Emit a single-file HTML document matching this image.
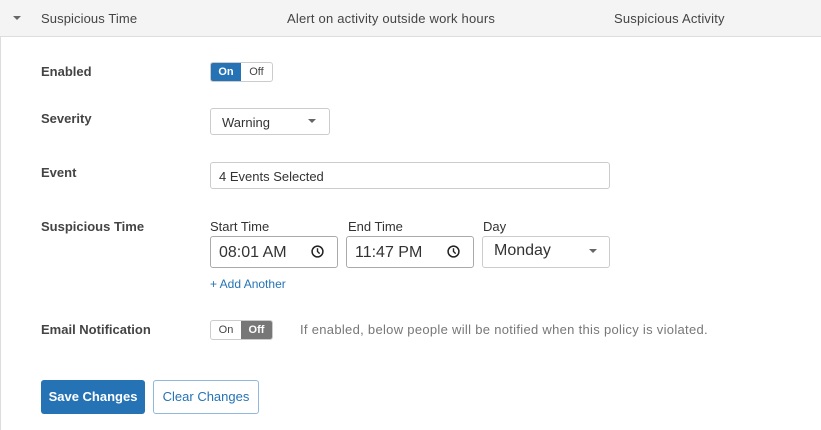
<!DOCTYPE html>
<html><head><style>
*{box-sizing:border-box;margin:0;padding:0}
body{width:821px;height:430px;background:#fff;font-family:"Liberation Sans",sans-serif;font-size:13px;color:#333;position:relative;overflow:hidden}
.a{position:absolute;white-space:nowrap}
.hdr{position:absolute;left:0;top:0;width:821px;height:37px;background:#f4f4f4;border-bottom:1px solid #ddd}
.lbl{font-weight:bold;color:#444}
.box{position:absolute;border:1px solid #ccc;border-radius:3px;background:#fff}
.caret{position:absolute;width:0;height:0;border-left:4px solid transparent;border-right:4px solid transparent;border-top:4px solid #666}
</style></head><body>
<div style="position:absolute;left:0;top:0;width:1px;height:430px;background:#ddd"></div>
<div class="hdr"></div>
<div class="caret" style="left:13px;top:16px"></div>
<div class="a" style="left:41px;top:11px;color:#444;letter-spacing:0.1px">Suspicious Time</div>
<div class="a" style="left:287px;top:11px;color:#444;letter-spacing:0.2px">Alert on activity outside work hours</div>
<div class="a" style="left:614px;top:11px;color:#444;letter-spacing:0.2px">Suspicious Activity</div>

<div class="a lbl" style="left:41px;top:64px">Enabled</div>
<div class="box" style="left:210px;top:62px;width:63px;height:20px"></div>
<div class="a" style="left:211px;top:63px;width:30px;height:18px;background:#2573b5;color:#fff;font-weight:bold;font-size:11px;text-align:center;line-height:18px;border-radius:2px 0 0 2px">On</div>
<div class="a" style="left:241px;top:63px;width:31px;height:18px;font-size:11px;text-align:center;line-height:18px;color:#444">Off</div>

<div class="a lbl" style="left:41px;top:111px">Severity</div>
<div class="box" style="left:210px;top:108px;width:120px;height:27px"></div>
<div class="a" style="left:222px;top:115px">Warning</div>
<div class="caret" style="left:308px;top:119px"></div>

<div class="a lbl" style="left:41px;top:165px">Event</div>
<div class="box" style="left:210px;top:162px;width:400px;height:27px"></div>
<div class="a" style="left:219px;top:169px">4 Events Selected</div>

<div class="a lbl" style="left:41px;top:219px">Suspicious Time</div>
<div class="a" style="left:210px;top:219px">Start Time</div>
<div class="a" style="left:348px;top:219px">End Time</div>
<div class="a" style="left:483px;top:219px">Day</div>
<div class="box" style="left:210px;top:236px;width:128px;height:32px;border-color:#aaa"></div>
<div class="a" style="left:219px;top:244px;font-size:16px">08:01 AM</div>
<svg class="a" style="left:311px;top:245px" width="13" height="13" viewBox="0 0 12 12"><circle cx="6" cy="6" r="5" fill="none" stroke="#222" stroke-width="1.4"/><path d="M6 3v3l2 2" fill="none" stroke="#222" stroke-width="1.3"/></svg>
<div class="box" style="left:346px;top:236px;width:128px;height:32px;border-color:#aaa"></div>
<div class="a" style="left:355px;top:244px;font-size:16px">11:47 PM</div>
<svg class="a" style="left:447px;top:245px" width="13" height="13" viewBox="0 0 12 12"><circle cx="6" cy="6" r="5" fill="none" stroke="#222" stroke-width="1.4"/><path d="M6 3v3l2 2" fill="none" stroke="#222" stroke-width="1.3"/></svg>
<div class="box" style="left:482px;top:236px;width:128px;height:32px"></div>
<div class="a" style="left:494px;top:242px;font-size:16px">Monday</div>
<div class="caret" style="left:589px;top:249px"></div>
<div class="a" style="left:210px;top:277px;font-size:12px;color:#2573b5">+ Add Another</div>

<div class="a lbl" style="left:41px;top:322px">Email Notification</div>
<div class="box" style="left:210px;top:320px;width:63px;height:20px"></div>
<div class="a" style="left:211px;top:321px;width:30px;height:18px;font-size:11px;text-align:center;line-height:18px;color:#444">On</div>
<div class="a" style="left:241px;top:321px;width:31px;height:18px;background:#777;color:#fff;font-weight:bold;font-size:11px;text-align:center;line-height:18px;border-radius:0 2px 2px 0">Off</div>
<div class="a" style="left:300px;top:322px;color:#777;letter-spacing:0.3px">If enabled, below people will be notified when this policy is violated.</div>

<div class="a" style="left:41px;top:380px;width:104px;height:34px;background:#2573b5;border-radius:3px;color:#fff;font-weight:bold;text-align:center;line-height:34px">Save Changes</div>
<div class="a" style="left:153px;top:380px;width:106px;height:34px;border:1px solid #8fb8dc;border-radius:3px;color:#2573b5;text-align:center;line-height:32px">Clear Changes</div>
</body></html>
